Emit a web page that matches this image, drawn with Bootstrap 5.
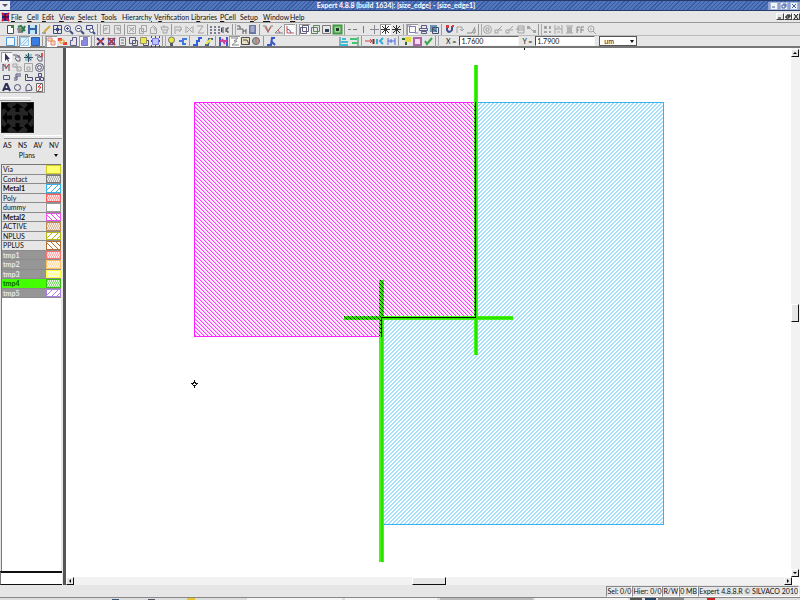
<!DOCTYPE html>
<html lang="en">
<head>
<meta charset="utf-8">
<meta name="viewport" content="width=device-width, initial-scale=1">
<title>Expert 4.8.8 (build 1634): [size_edge] - [size_edge1]</title>
<link href="https://cdn.jsdelivr.net/npm/bootstrap@5.3.0/dist/css/bootstrap.min.css" rel="stylesheet">
<style>
:root { --face: #e6e6e6; --edge: #8a8a8a; --ink: #111; }
body { font: 7px/10px Lato, "Noto Sans", sans-serif; color: var(--ink); background: var(--face); }
button, input, select { font: inherit; color: inherit; border-radius: 0; }
button { background: none; border: 0; padding: 0; }
svg { display: block; }
.titlebar { height: 11px; color: #fff; border-top: 1px solid #26396b; border-bottom: 1px solid #26396b;
  background: repeating-linear-gradient(135deg, #3b5a9f 0 1px, #5076bd 1px 3px); }
.titlebar h1 { font: bold 7px/9px Lato, sans-serif; padding-left: 14px; }
.winbtn { width: 8px; height: 8px; background: #f3f5fb; border: 1px solid #a9b7d8; color: #3b5a9f; }
.winmenu { width: 10px; height: 9px; background: #eef0f6; color: #445; }
.winset { background: #8ea3d0; gap: 2px; padding: 0 2px; }
.menubar { height: 12px; border-bottom: 1px solid #999; }
.menubar a { color: var(--ink); font-size: 7px; line-height: 12px; text-decoration: none; }
.menubar a span { text-decoration: underline; }
.docbtn { width: 8px; height: 7px; border: 1px solid; border-color: #fff #444 #444 #fff; }
.toolrow { height: 12px; padding-left: 5px; }
.toolrow.second { height: 13px; border-top: 1px solid #bbb; border-bottom: 2px solid #777; }
.tool { width: 11px; height: 11px; flex: none; }
.tool svg { opacity: .85; }
.tool.pressed { background: #fafafa; box-shadow: inset 1px 1px #999; }
.sep { height: 11px; flex: none; border-left: 1px solid #999; margin-left: 1px; }
.sep.s3 { width: 2px; } .sep.s4 { width: 3px; }
.sep.s5 { width: 4px; border-right: 1px solid #aaa; }
.docked { margin-left: 61px; border-left: 0; }
.coords label { padding: 0 3px; }
.coord { width: 60px; height: 10px; border: 1px solid; border-color: #666 #f8f8f8 #f8f8f8 #444; background: #fff; padding: 0 1px; outline: 0; }
.unitbox { width: 38px; height: 10px; border: 1px solid #555; background: #fff; padding: 0 4px; line-height: 7px; appearance: none; outline: 0; }
.unitwrap::after, .plans::after { content: ""; border: 2px solid transparent; border-top: 3px solid #111; border-bottom: 0; }
.unitwrap::after { margin-left: -7px; z-index: 1; pointer-events: none; }
.unitwrap { border-right: 1px solid #999; padding-right: 1px; }
.side { width: 63px; padding: 2px 1px 0 0; }
.gripbar { height: 4px; border-top: 1px solid #fff; border-bottom: 1px solid #999; background: #eee; flex: none; }
.palette { width: 45px; border-right: 1px solid #999; border-bottom: 1px solid #999; border-top: 1px solid #888; padding: 1px 0 0 1px; }
.palette .tool { height: 10px; }
.toolgrid { display: grid; grid-template-columns: repeat(4, 11px); row-gap: 0; }
.panpad { width: 33px; height: 31px; background: #262626; margin: 1px 0 2px 1px; }
.views { padding: 1px 3px 0; }
.views button, .plans { font-size: 7px; }
.layers { background: #fff; border-left: 1px solid #777; border-top: 1px solid #777; margin: 4px 1px 0 1px; }
.layerlist { display: grid; grid-auto-rows: 1fr; height: 133px; }
.layer { font: 7px/8px Lato, sans-serif; background: var(--face); border-bottom: 1px solid #8c8c8c; text-align: left; padding-left: 1px; min-height: 0; }
.layer svg { width: 15px; height: 100%; border: 1px solid; }
.layer.fw-bold { font: bold 7px/8px Lato, sans-serif; }
.layer.off { background: #969696; color: #e8e8e8; font: bold 7px/8px Lato, sans-serif; }
.layer.active { background: #4f0; color: #060; font: bold 7px/8px Lato, sans-serif; }
.cmd { height: 14px; border: 1px solid #777; border-top: 2px solid #111; border-right: 0; border-bottom: 1px solid #111; background: #fff; outline: 0; }
.drawing { border-left: 3px solid #555; background: #fff; }
.track { background: #f2f2f2; }
.arrow { width: 8px; height: 8px; background: var(--face); border: 1px solid; border-color: #fff #111 #111 #fff; flex: none; }
.vtrack { width: 9px; padding: 1px 1px 0 0; }
.vthumb { height: 18px; width: 8px; background: var(--face); border: 1px solid; border-color: #fff #111 #111 #fff; }
.hthumb { width: 34px; height: 8px; background: var(--face); border: 1px solid; border-color: #fff #111 #111 #fff; }
.statusbar { height: 12px; padding: 1px 1px 0; }
.statusbar span { border: 1px solid; border-color: #888 #fff #fff #888; line-height: 9px; white-space: nowrap; }
.taskstrip { height: 3px; border-top: 1px solid #888; background: #ddd; }
</style>
</head>
<body class="vh-100 d-flex flex-column overflow-hidden">
<header>
  <div class="titlebar d-flex align-items-center">
    <button class="winmenu" aria-label="Window menu"><svg width="10" height="9"><path d="M2 3l3 3 3-3z" fill="#556"/></svg></button>
    <h1 class="flex-grow-1 text-center m-0">Expert 4.8.8 (build 1634): [size_edge] - [size_edge1]</h1>
    <div class="winset d-flex">
      <button class="winbtn" aria-label="Minimize"><svg width="6" height="6"><path d="M1 4h3" stroke="#3b5a9f"/></svg></button>
      <button class="winbtn" aria-label="Restore"><svg width="6" height="6"><path d="M2 1h3v3M1 2h3v3H1z" fill="none" stroke="#3b5a9f"/></svg></button>
      <button class="winbtn" aria-label="Close"><svg width="6" height="6"><path d="M1 1l4 4M5 1L1 5" stroke="#3b5a9f"/></svg></button>
    </div>
  </div>
  <nav class="menubar d-flex align-items-center" aria-label="Main menu">
    <svg width="11" height="10"><path d="M2 1h7v8H2z" fill="#23a"/><path d="M2 1l7 8M9 1L2 9" stroke="#d13" stroke-width="2"/><path d="M5 2v6M2 5h7" stroke="#114"/></svg>
    <div class="d-flex" id="menus"></div>
    <div class="d-flex ms-auto">
      <button class="docbtn" aria-label="Minimize document"><svg width="6" height="5"><path d="M1 4h3" stroke="#111"/></svg></button>
      <button class="docbtn" aria-label="Restore document"><svg width="6" height="5"><path d="M2 1h3v2M1 2h3v2H1z" fill="none" stroke="#111"/></svg></button>
      <button class="docbtn" aria-label="Close document"><svg width="6" height="5"><path d="M1 0l4 5M5 0L1 5" stroke="#111"/></svg></button>
    </div>
  </nav>
  <div class="toolrow d-flex align-items-center" id="row1" role="toolbar" aria-label="Standard tools"></div>
  <div class="toolrow second d-flex align-items-center" role="toolbar" aria-label="Edit tools">
    <div class="d-flex" id="row2"></div>
    <div class="docked d-flex" id="row2b"></div>
    <form class="coords d-flex align-items-center">
      <i class="sep s5"></i>
      <label for="cx" class="ms-1">X =</label><input id="cx" class="coord" value="1.7600">
      <label for="cy">Y =</label><input id="cy" class="coord" value="1.7900">
      <div class="unitwrap d-flex align-items-center ms-1"><select class="unitbox" aria-label="Units"><option>um</option></select></div>
    </form>
  </div>
</header>

<main class="d-flex flex-grow-1 overflow-hidden">
  <aside class="side d-flex flex-column flex-shrink-0">
    <div class="palette"><div class="toolgrid" id="palette"></div></div>
    <div class="gripbar mt-1 w-50"></div>
    <svg class="panpad" viewBox="0 0 33 31" role="img" aria-label="Pan pad"><g fill="#000">
      <circle cx="16.500" cy="15.500" r="3"/>
      <path d="M16.500 1l6 5h-4v4h-4V6h-4zM16.500 30l6-5h-4v-4h-4v4h-4zM1 15.500l5-6v4h5v4H6v4zM32 15.500l-5-6v4h-5v4h5v4zM1 1h7L6 3l4 4-3 3-4-4-2 2zM32 1h-7l2 2-4 4 3 3 4-4 2 2zM1 30h7l-2-2 4-4-3-3-4 4-2-2zM32 30h-7l2-2-4-4 3-3 4 4 2-2z"/></g></svg>
    <div class="gripbar ms-1"></div>
    <div class="views d-flex justify-content-between"><button>AS</button><button>NS</button><button>AV</button><button>NV</button></div>
    <button class="plans d-flex align-items-center pe-1"><span class="flex-grow-1 text-center">Plans</span></button>
    <section class="layers flex-grow-1" aria-label="Layers"><div class="layerlist" id="layers"></div></section>
    <input class="cmd w-100" aria-label="Layer filter">
  </aside>

  <section class="drawing d-flex flex-column flex-grow-1 overflow-hidden">
    <div class="d-flex flex-grow-1 overflow-hidden">
      <svg class="flex-grow-1 h-100" role="img" aria-label="Layout of size_edge1" shape-rendering="crispEdges">
        <defs>
          <pattern id="hatch-metal2" width="4" height="4" patternUnits="userSpaceOnUse"><path d="M0 0h4v4H0z" fill="#fff2ff"/><path d="M0 0h1v1H0zM1 1h1v1H1zM2 2h1v1H2zM3 3h1v1H3z" fill="#ff3cff"/><path d="M1 0h1v1H1zM2 1h1v1H2zM3 2h1v1H3zM0 3h1v1H0z" fill="#ffc4ff"/></pattern>
          <pattern id="hatch-dark" width="4" height="4" patternUnits="userSpaceOnUse"><path d="M0 0h1v1H0zM1 1h1v1H1zM2 2h1v1H2zM3 3h1v1H3z" fill="#063006"/></pattern>
          <pattern id="hatch-metal1" width="4" height="4" patternUnits="userSpaceOnUse"><path d="M0 3h2v1H0zM1 2h2v1H1zM2 1h2v1H2zM3 0h1v1H3zM0 0h1v1H0z" fill="#a6dffa"/></pattern>
        </defs>
        <g transform="translate(-66 -48)">
          <path d="M476 102h187v422H382V318h94z" fill="url(#hatch-metal1)"/>
          <path d="M476 102h187v1H476zM663 102h1v423h-1zM382 524h282v1H382z" fill="#38b2f5"/>
          <path d="M194 102h281v216h-94v18H194z" fill="url(#hatch-metal2)"/>
          <path d="M194 102h281v1H194zM194 102h1v235h-1zM194 336h188v1H194z" fill="#ff20ff"/>
          <path d="M474 65h4v290h-4zM344 316h169v4H344zM379 280h5v282h-5z" fill="#3dfa10"/>
          <path d="M475 65h2v290h-2zM344 317h169v2H344zM381 280h2v282h-2z" fill="#2fe000"/>
          <path d="M379 280h5v37h-5zM344 316h37v4h-37zM379 320h3v16h-3zM474 103h2v214h-2z" fill="url(#hatch-dark)"/>
          <path d="M475 102h1v216h-1zM381 317h94v1h-94zM381 317h1v20h-1z" fill="#051805"/>
          <path d="M194 380h1v3h-1zM194 385h1v3h-1zM191 383h3v1h-3zM195 383h3v1h-3zM193 382h1v1h-1zM195 382h1v1h-1zM193 385h1v1h-1zM195 385h1v1h-1zM192 384h1v1h-1zM196 384h1v1h-1zM524 48h1v2h-1z" fill="#111"/>
        </g>
      </svg>
      <div class="vtrack track d-flex flex-column justify-content-between">
        <button class="arrow" aria-label="Scroll up"><svg width="6" height="6"><path d="M1 4l2-2 2 2z"/></svg></button>
        <div class="vthumb"></div>
        <button class="arrow" aria-label="Scroll down"><svg width="6" height="6"><path d="M1 2l2 2 2-2z"/></svg></button>
      </div>
    </div>
    <div class="track d-flex justify-content-between me-2">
      <button class="arrow" aria-label="Scroll left"><svg width="6" height="6"><path d="M4 1L2 3l2 2z"/></svg></button>
      <div class="hthumb"></div>
      <button class="arrow" aria-label="Scroll right"><svg width="6" height="6"><path d="M2 1l2 2-2 2z"/></svg></button>
    </div>
  </section>
</main>

<footer>
  <div class="statusbar d-flex justify-content-end">
    <span>Sel: 0/0</span><span>Hier: 0/0</span><span>R/W</span><span>0 MB</span><span class="about">Expert 4.8.8.R © SILVACO 2010</span>
  </div>
  <svg class="taskstrip w-100" viewBox="0 0 800 2" preserveAspectRatio="none"><path d="M247 0h95v2h-95zM345 0h92v2h-92z" fill="#f6f6f6"/><path d="M440 0h93v2h-93z" fill="#bbb"/><path d="M535 0h93v2h-93z" fill="#f6f6f6"/><path d="M112 1h7v1h-7z" fill="#357"/><path d="M148 1h7v1h-7z" fill="#556"/><path d="M187 0h8v2h-8z" fill="#e9c52c"/><path d="M630 0h12v2h-12z" fill="#555"/><path d="M645 0h11v2h-11z" fill="#246"/><path d="M658 0h26v2h-26z" fill="#888"/><path d="M707 0h8v2h-8z" fill="#c22"/></svg>
</footer>

<script>
const p = (d, c = '#333', w = 1, f = 'none') => `<path d="${d}" stroke="${c}" stroke-width="${w}" fill="${f}"/>`;
const s = (d, c) => `<path d="${d}" fill="${c}"/>`;
const G = '#999', N = '#223070';
const lens = p('M7 7l3 3', N, 2) + '<circle cx="4.500" cy="4.500" r="3" fill="#fff" stroke="#223070"/>';
const net = s('M1 2h3v3H1zM7 6h3v3H7z', G) + p('M4 4l3 3', G);
const shape = {
  new: p('M2.500 1.500h6v8h-6z', '#333', 1, '#fff') + s('M6 1h3v3H6z', '#171'),
  open: s('M1 4h5l1 5H2z', '#777') + p('M2 3l3-1 4 5M6 8l3-6', '#163', 2),
  save: s('M1 1h9v9H1z', '#1b4c96') + s('M3 1h5v3H3zM3 6h5v4H3z', '#b9e4ff'),
  pencil: p('M3 8l6-6', '#c9a524', 2) + p('M1 9h4', '#555'),
  fit: p('M1.500 1.500h8v8h-8zM1 5.500h9M5.500 1v9', N) + s('M4 4h3v3H4z', N),
  zin: lens + p('M3 4.500h3M4.500 3v3', N), zout: lens + p('M3 4.500h3', N),
  zreg: p('M1.500 1.500h6v4h-6z', N) + p('M8 8l2 2', N, 2) + '<circle cx="6.500" cy="6.500" r="2" fill="#fff" stroke="#223070"/>',
  undo: p('M2.500 1.500h6v8h-6zM7 4H4v3M4 4l2 2', G), redo: p('M2.500 1.500h6v8h-6zM4 4h3v3M7 4L5 6', G),
  cut: p('M1.500 1.500h8v8h-8zM3 3l5 5M8 3L3 8M4 5h4', G), copy: p('M4.500 1.500h5v6h-5zM2.500 4.500h4v5h-4z', G),
  paste: p('M2.500 4.500l3-3 3 3v5h-6zM5 4h2v3', G), del: p('M2 3h7v3H3zM8 6v3H4V7M5 1v3', G),
  al1: p('M2 2v8M3 3h5v3H3M6 8l3-3', G), al2: p('M2 2v7M9 2v7M3 3l5 5M8 3L3 8', G), al3: p('M2 2h6L3 9h6', G),
  grid: s('M1 2h2v2H1zM5 2h2v2H5zM9 2h2v2H9zM1 5h2v2H1zM5 5h2v2H5zM9 5h2v2H9zM1 8h2v2H1zM5 8h2v2H5zM9 8h2v2H9z', '#6a6a88'),
  ruler: p('M4 4H1.500v4H4M1 6h3M6 4v4M9 4H7v4h2', '#223'),
  hier: p('M1 2h3v3H1M4 5h3M7 5v5M10 5v5M7 7h3', '#444'),
  calc: s('M2 1h7v9H2z', '#536599') + p('M3.500 3h4M3.500 5h4M3.500 7h4', '#dde'),
  ang1: p('M1 2h3l2 5 3-5h2M6 7v2', '#865') + p('M3 3l3 5 3-5', '#a44'),
  ang2: p('M9 2L2 9h8', '#777') + p('M5 6l2 3', '#c33'), ang3: p('M3 2v7h7', '#c33') + p('M3 5q3 0 4 4', '#448'),
  box1: p('M1.500 3.500h6v6h-6zM3.500 1.500h6v6h-6z', '#446'), box2: p('M1.500 3.500h6v6h-6zM3.500 1.500h6v6h-6z', '#474'),
  box3: p('M1.500 1.500h8v8h-8z', '#666') + s('M4 5h4v3H4z', '#124'), box4: p('M1.500 1.500h8v8h-8z', '#2a8a2a', 2, '#7fd87f') + s('M4 4h3v3H4z', '#111'),
  dash: p('M1 5.500h3M6 5.500h4', '#666'), vbar: p('M5.500 2v7', '#666'), plus: p('M1 5.500h9M5.500 1v9', '#778'),
  star: p('M1 5.500h9M5.500 1v9M2 2l7 7M9 2L2 9', '#111'),
  win1: p('M2.500 2.500h6v6h-6zM1 2h3M8 9h3', '#66a'), win2: p('M3.500 1.500h5v3h-5zM1.500 4.500h8v2h-8zM3.500 7.500h5v2h-5z', '#447'),
  win3: s('M1 1h7v7H1z', '#58a') + p('M3.500 3.500h6v6h-6zM4 5l4 3', '#235'),
  mag: p('M3 2v4q2 4 5 0V2', '#238', 2) + s('M2 1h3v3H2zM8 1h2v2H8z', '#c22'),
  step: p('M2 9V3h5v3M5 5l2 2 2-2', G), step2: p('M1 9h5l3-6M7 9h2V5', '#777'),
  ring: '<circle cx="5.500" cy="5.500" r="4" fill="none" stroke="#999"/>' + p('M4 4h3v3H4z', G),
  link: p('M2 6h3v3H2zM5 6l4-4M6 6h3', G), list: p('M3 2h6v7H3zM3 4h6M3 6h6M1 5h3', G), net,
  dots: s('M2 2h3v3H2zM7 2h2v3H7zM2 7h3v2H2zM7 7h2v2H7z', G), hh: p('M2 1v9M9 1v9M2 5h7M4 3h3M4 8h3', G),
  bars: p('M2 2h7M2 9h7', G) + s('M3 3h5v6H3z', '#aaa'), ff: p('M2 9V3h3M2 6h2M6 9V3h3M6 6h3', '#777'), look: '<circle cx="5" cy="5" r="3" fill="none" stroke="#999"/>' + p('M7 7l3 3M4 5h2', G),
  wht: p('M1.500 1.500h8v8h-8z', '#3d8fd6', 1, '#f2faff'), hat: p('M1.500 1.500h8v8h-8z', '#8bc0e8', 1, '#dff0fb') + p('M2 8l6-6M4 9l5-5', '#8bc0e8'),
  blu: p('M1.500 1.500h8v8h-8z', '#14469c', 1, '#1b6be0'),
  r1: p('M2 2h4v3H2zM5 5h4v4H5z', '#d66') + p('M3 4h4v4', '#da2'), r2: s('M1 2h4v3H1zM6 6h4v3H6z', '#e22') + p('M3 4h4v3H3z', '#e90'),
  poly: p('M2.500 9.500v-5h2v-3h4v8z', '#447'), polyf: p('M2.500 9.500v-5h2v-3h4v8z', '#66b', 1, '#7876d8'),
  x1: p('M2 2l7 7M9 2L2 9', '#a0233c', 2) + s('M2 2h2v2H2zM7 2h2v2H7zM2 7h2v2H2zM7 7h2v2H7z', '#228'),
  x2: p('M2.500 2.500h6v6h-6z', '#44a', 1) + p('M2 2l7 7M9 2L2 9', '#923', 2),
  doc: p('M2.500 1.500h6v8h-6zM4 4h3M4 7h3', '#667'), sq2: p('M1.500 1.500h6v6h-6zM4.500 4.500h5v5h-5z', '#446'),
  yel: p('M4.500 4.500h5v5h-5z', '#335') + p('M1.500 1.500h6v6h-6z', '#885', 1, '#f1e92b'),
  sel: p('M2.500 2.500h6v6h-6z', '#66e', 1, '#b8c0ff') + p('M1 1h1M5 1h1M9 1h1M1 5h1M9 5h1M1 10h1M5 10h1M9 10h1', '#22c', 2),
  bulb: '<circle cx="5.500" cy="4" r="3" fill="#eee52a" stroke="#665"/>' + s('M4 7h3v3H4z', '#444'),
  tree: p('M2 5h4M6 2v6h3M6 3h4', '#26d', 2), stair: p('M1 9h4V5h2V2h3', '#1348d6', 2), stair2: p('M2 9h3l1-6h4', '#248', 2) + p('M3 8l5-5', '#ee3', 2),
  mm: p('M2 1v9M9 1v9', '#24c', 2) + p('M2 5h7M4 3l3 5', '#c29', 2), zz: p('M2 2h7L5 5h3L3 9h7', '#777'),
  pic: p('M1.500 1.500h8v7h-8zM3 4h4l2 4', '#333', 1, '#e9e0b8'), ball: '<circle cx="5" cy="5" r="3.500" fill="#999" stroke="#555"/>' + p('M5 2v6', '#c55'),
  run: p('M1 9h4l1-7h3M5 5l4 4', '#1a3fc8', 2), in1: p('M2 1v9', '#167') + p('M4 3h4M3 6h7M2 9h8', '#1bb8d4', 2),
  in2: p('M9 1v9', '#173') + p('M1 3h7M3 7h6', '#25c060', 2), rr: p('M1 5h6M6 3l2 2-2 2', '#c22') + p('M9.500 3v5', '#611', 2),
  kk: p('M2 3v5M8 2L5 5l3 3', '#19a5d5', 2), hb: p('M2 2v7M9 2v7M2 5h7M5 3v4', '#35d'),
  flag: p('M5 9V5M1 3h4', '#151', 2) + s('M4 1h6v5H4z', '#e5d921'), pink: p('M2 2h7v7H2z', '#a3529b', 2, '#ffd9f5'), ok: p('M2 5l2 3 5-6', '#1f9a35', 2),
  arrow: s('M4 1v8l2-2 1 3 1-1-1-2h2z', '#114'), hand: p('M1 3h4l2 2M3 5h5v4H5L3 6M7 3v2', '#446'),
  move: s('M2 2h7v7H2z', '#7cc') + p('M5.500 1v9M1 5.500h9M3 3l5 5', '#235'), handr: p('M1 3h4l2 2M3 5h5v4H5L3 6', '#446') + p('M8 1v4', '#d33', 2),
  mw: p('M2 9V2l3 4 3-4v7', '#335') + p('M4 2l1 5 3-5', '#d33'), knot: p('M1 2h4v3H1zM5 5h4v4H5zM3 4l4 4', G), frame: p('M1.500 1.500h8v8h-8zM4 5h3v3H4z', G),
  target: '<circle cx="5.500" cy="5.500" r="4" fill="none" stroke="#446"/><circle cx="5.500" cy="5.500" r="2" fill="none" stroke="#446"/>',
  rect: p('M2.500 3.500h6v4h-6z', '#336'), wire: p('M2 8h3V4h4M2 6h2V2h5', '#336'), ell: p('M2.500 2.500h2v3h5v3h-7z', '#336'),
  blocks: p('M4.500 1.500h3v3h-3zM1.500 5.500h4v3h-4zM6.500 5.500h3v3h-3z', '#336'),
  textA: p('M2 9l3-7h1l3 7M3 7h5', '#114', 2), circ: '<circle cx="5.500" cy="5.500" r="3" fill="none" stroke="#336"/>', arc: p('M3 9V5q1-3 3-3 3 2 3 6z', '#336'),
  pin: p('M2.500 1.500h6v8h-6z', '#555', 1, '#fff') + p('M7 2L4 5h3L4 9', '#d11')
};
const icon = k => `<svg width="11" height="11" viewBox="0 0 11 11" aria-hidden="true">${shape[k]}</svg>`;
const fill = (id, spec) => document.getElementById(id).innerHTML = spec.split(' ').map(k => {
  if (/^[345]$/.test(k)) return `<i class="sep s${k}"></i>`;
  const on = k.endsWith('*'), n = k.replace('*', '');
  return `<button class="tool${on ? ' pressed' : ''}" aria-label="${n}">${icon(n)}</button>`;
}).join('');
fill('row1', 'new open save 3 pencil fit zin zout zreg 5 undo redo 3 cut copy paste del 3 al1 al2 al3 3 grid ruler 5 hier calc 4 ang1 ang2 ang3* 4 box1* box2 box3 box4 4 dash vbar plus star* star 5 win1* win2 win3 4 mag step step2 5 ring link link list net 5 dots hh bars ff look');
fill('row2', 'wht 3 hat* blu 5 r1* r2 poly polyf* 5 x1 x2 doc sq2 yel sel 5 bulb tree 4 stair stair2 4 mm zz* pic ball 4 run');
fill('row2b', 'in1 in2 4 rr kk hb 4 flag pink ok');
fill('palette', 'arrow* hand move handr mw knot frame target rect wire ell blocks textA circ arc pin');

const menus = [['File', 0, 16], ['Cell', 0, 15], ['Edit', 0, 17], ['View', 0, 19], ['Select', 0, 23], ['Tools', 0, 21], ['Hierarchy', 8, 32], ['Verification', 1, 37], ['Libraries', 2, 29], ['PCell', 0, 20], ['Setup', 3, 23], ['Window', 0, 27], ['Help', 0, 16]];
document.getElementById('menus').innerHTML = menus.map(([t, i, w]) =>
  `<a href="#" style="width:${w}px">${t.slice(0, i)}<span>${t[i]}</span>${t.slice(i + 1)}</a>`).join('');

const layers = [['Via', '#cccc22', 'solid'], ['Contact', '#777', 'dot'], ['Metal1', '#3ab0e8', 'up', 'fw-bold'], ['Poly', '#ff5a5a', 'dot'], ['dummy', '#999', 'none'],
  ['Metal2', '#f050f0', 'down', 'fw-bold'], ['ACTIVE', '#c08850', 'dot'], ['NPLUS', '#b5b520', 'up'], ['PPLUS', '#b07030', 'down'],
  ['tmp1', '#ff7070', 'dot', 'off'], ['tmp2', '#ffc060', 'dot', 'off'], ['tmp3', '#ffff40', 'dot', 'off'], ['tmp4', '#2fc010', 'dot', 'active'], ['tmp5', '#b080e8', 'up', 'off']];
const art = { solid: '<path d="M0 0h15v10H0z" fill="#ffff70"/>', none: '' };
document.getElementById('layers').innerHTML = layers.map(([n, c, k, cls = '']) => {
  const g = k === 'dot' ? [1, 3, 5, 7].map((y, i) => `<path d="M${i % 2} ${y}h14" stroke="${c}" stroke-dasharray="1 1"/>`).join('') + [0, 2, 4, 6].map(y => `<path d="M0 ${y}h14" stroke="${c}" stroke-opacity=".3"/>`).join('')
    : k === 'up' ? `<path d="M-2 7l8-8M3 8l8-8M8 8l8-8" stroke="${c}" fill="none"/>`
    : k === 'down' ? `<path d="M-1 0l8 8M4 0l8 8M9 0l8 8" stroke="${c}" fill="none"/>` : art[k];
  return `<button class="layer d-flex ${cls}"><span class="flex-grow-1">${n}</span><svg style="color:${c};background:#fff">${g}</svg></button>`;
}).join('');
</script>
<script src="https://cdn.jsdelivr.net/npm/bootstrap@5.3.0/dist/js/bootstrap.bundle.min.js"></script>
</body>
</html>
